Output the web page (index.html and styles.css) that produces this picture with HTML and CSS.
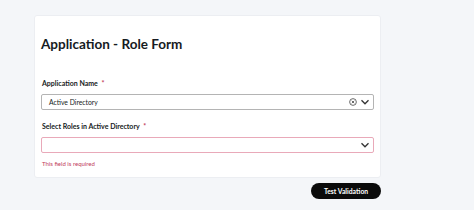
FILE: index.html
```html
<!DOCTYPE html>
<html lang="en">
<head>
    <meta charset="UTF-8">
    <meta name="viewport" content="width=device-width, initial-scale=1.0">
    <title>Application - Role Form</title>
    <link rel="stylesheet" href="styles.css">
</head>
<body>

<div class="page">
    <div class="card">
        <div class="title">Application - Role Form</div>

        <!-- Application select -->
        <div class="field">
            <label class="label">Application Name <span class="req">*</span></label>
            <div class="select">
                <span class="value">Active Directory</span>
                <span class="icons">
                    <svg class="clear" viewBox="0 0 10 10" width="8" height="8">
                        <circle cx="5" cy="5" r="4.2" fill="none" stroke="#555" stroke-width="1.1"/>
                        <path d="M3.4 3.4 L6.6 6.6 M6.6 3.4 L3.4 6.6" stroke="#555" stroke-width="1.1"/>
                    </svg>
                    <svg class="chevron" viewBox="0 0 10 10" width="10" height="10">
                        <path d="M1.5 3.2 L5 6.8 L8.5 3.2" fill="none" stroke="#333" stroke-width="1.3"/>
                    </svg>
                </span>
            </div>
        </div>

        <!-- Roles select -->
        <div class="field">
            <label class="label">Select Roles in Active Directory <span class="req">*</span></label>
            <div class="select invalid">
                <span class="value"></span>
                <span class="icons">
                    <svg class="chevron" viewBox="0 0 10 10" width="10" height="10">
                        <path d="M1.5 3.2 L5 6.8 L8.5 3.2" fill="none" stroke="#333" stroke-width="1.3"/>
                    </svg>
                </span>
            </div>
            <div class="error">This field is required</div>
        </div>
    </div>

    <div class="actions">
        <button class="btn">Test Validation</button>
    </div>
</div>

</body>
</html>
```

FILE: styles.css
```css
body {
    font-family: Lato, "Open Sans", sans-serif;
    margin: 0;
    padding: 15px 0 0 34px;
    background-color: #f4f6f9;
    color: #161b22;
}
.page {
    width: 347px;
    display: flex;
    flex-direction: column;
}
.card {
    background-color: #ffffff;
    border: 1px solid #eceef2;
    border-radius: 3px;
    padding: 19px 6px 8px 6px;
}
.title {
    font-size: 13.5px;
    line-height: 18px;
    font-weight: bold;
    margin-bottom: 25px;
}
.field {
    margin-bottom: 11px;
}
.field:last-child {
    margin-bottom: 0;
}
.label {
    display: block;
    font-size: 7px;
    line-height: 10px;
    font-weight: bold;
    margin-bottom: 6px;
    padding-left: 1px;
}
.req {
    color: #c0395a;
    margin-left: 2px;
}
.select {
    height: 14px;
    border: 1px solid #b4b4b4;
    border-radius: 2px;
    display: flex;
    align-items: center;
    justify-content: space-between;
    padding: 0 3px 0 7px;
}
.select.invalid {
    border-color: #e9a9b9;
}
.value {
    font-size: 6.8px;
}
.icons {
    display: flex;
    align-items: center;
    gap: 3px;
}
.error {
    color: #c0395a;
    font-size: 6px;
    line-height: 10px;
    margin-top: 6px;
    padding-left: 1px;
}
.actions {
    display: flex;
    justify-content: flex-end;
    margin-top: 5px;
}
.btn {
    font-family: Lato, sans-serif;
    background-color: #0b0b0b;
    color: #ffffff;
    border: none;
    border-radius: 8px;
    height: 16px;
    width: 70px;
    font-size: 6.8px;
    font-weight: bold;
    padding: 0;
    cursor: pointer;
}
```
